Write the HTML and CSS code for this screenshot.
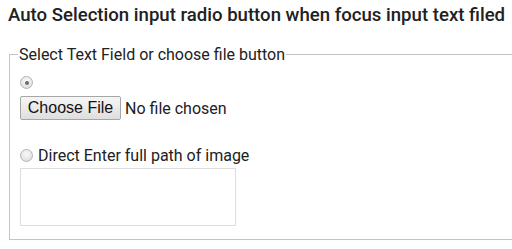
FILE: index.html
```html
<!DOCTYPE html>
<html>
<head>
<meta charset="utf-8">
<link rel="stylesheet" href="styles.css">
</head>
<body>
<h3 class="title">Auto Selection input radio button when focus input text filed</h3>
<fieldset class="group">
  <legend class="legend">Select Text Field or choose file button</legend>
  <div class="row-radio"><span class="radio checked"></span></div>
  <div class="row-file">
    <button class="choose" type="button">Choose File</button>
    <span class="nofile">No file chosen</span>
  </div>
  <div class="row-direct">
    <span class="radio"></span>
    <span class="direct-label">Direct Enter full path of image</span>
  </div>
  <div class="textbox"></div>
</fieldset>
</body>
</html>
```
FILE: styles.css
```css
html, body {
  margin: 0;
  padding: 0;
  background: #fff;
  overflow: hidden;
}
body {
  font-family: Roboto, "Liberation Sans", sans-serif;
  color: #212121;
  width: 512px;
  height: 249px;
  overflow: hidden;
}
.title {
  margin: 0;
  padding: 5px 0 0 8px;
  font-size: 18.6px;
  font-weight: 500;
  line-height: 21px;
  white-space: nowrap;
}
.group {
  margin: 19px 0 0 9px;
  width: 503px;
  border: 1px solid #c4c4c4;
  border-right: none;
  padding: 0 10px 13px 10px;
  box-sizing: border-box;
}
.legend {
  font-size: 16px;
  line-height: 19px;
  padding: 0 1px;
  margin-left: -2px;
  color: #212121;
}
.radio {
  display: inline-block;
  width: 13px;
  height: 13px;
  border-radius: 50%;
  box-sizing: border-box;
  border: 1px solid #b4b4b4;
  background: radial-gradient(circle at 50% 35%, #fafafa 0%, #e6e6e6 60%, #d4d4d4 100%);
  position: relative;
  flex: none;
}
.radio.checked::after {
  content: "";
  position: absolute;
  left: 3.5px;
  top: 3.5px;
  width: 4px;
  height: 4px;
  border-radius: 50%;
  background: #6a6a6a;
}
.row-radio {
  height: 13px;
  margin-top: 10px;
}
.row-file {
  display: flex;
  align-items: center;
  margin-top: 9px;
  height: 24px;
}
.choose {
  font-family: "Liberation Sans", Arial, sans-serif;
  font-size: 16px;
  color: #111;
  height: 24px;
  width: 101px;
  padding: 0;
  margin: 0;
  border: 1px solid #a6a6a6;
  border-radius: 2px;
  background: linear-gradient(#f6f6f6, #dedede);
  line-height: 22px;
}
.nofile {
  margin-left: 4px;
  font-size: 16px;
  color: #212121;
}
.row-direct {
  display: flex;
  align-items: center;
  margin-top: 26px;
  height: 19px;
}
.direct-label {
  margin-left: 5px;
  font-size: 16px;
  line-height: 19px;
}
.textbox {
  margin-top: 3px;
  width: 216px;
  height: 58px;
  box-sizing: border-box;
  border: 1px solid #dedede;
}
```
